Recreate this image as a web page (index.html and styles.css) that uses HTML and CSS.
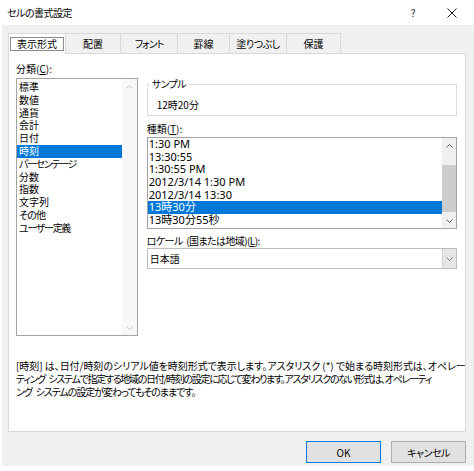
FILE: index.html
```html
<!DOCTYPE html>
<html lang="ja">
<head>
<meta charset="utf-8">
<title>セルの書式設定</title>
<link rel="stylesheet" href="styles.css">
</head>
<body>
<div class="titlebar">
  <span class="title">セルの書式設定</span>
  <span class="help">?</span>
  <span class="close"><svg width="10" height="10" viewBox="0 0 10 10"><path d="M0.5 0.5L9.5 9.5M9.5 0.5L0.5 9.5" stroke="#1a1a1a" stroke-width="1" fill="none"/></svg></span>
</div>
<div class="dialog">
  <div class="tabs">
    <div class="tab active w1"><span class="focus">表示形式</span></div>
    <div class="tab w2">配置</div>
    <div class="tab w3 tight">フォント</div>
    <div class="tab w4">罫線</div>
    <div class="tab w5 tight-s">塗りつぶし</div>
    <div class="tab w6">保護</div>
  </div>
  <div class="panel">
    <div class="columns">
      <div class="col-left">
        <div class="label">分類(<u>C</u>):</div>
        <div class="listbox cat">
          <ul class="items">
            <li>標準</li>
            <li>数値</li>
            <li>通貨</li>
            <li>会計</li>
            <li>日付</li>
            <li class="sel">時刻</li>
            <li class="kana">パーセンテージ</li>
            <li>分数</li>
            <li>指数</li>
            <li>文字列</li>
            <li class="kana-s">その他</li>
            <li class="kana">ユーザー定義</li>
          </ul>
          <div class="vscroll light">
            <div class="arrow"><svg width="7" height="4" viewBox="0 0 7 4"><path d="M0.5 3.5L3.5 0.5L6.5 3.5" fill="none" stroke="#c4c4c4" stroke-width="1"/></svg></div>
            <div class="track"></div>
            <div class="arrow"><svg width="7" height="4" viewBox="0 0 7 4"><path d="M0.5 0.5L3.5 3.5L6.5 0.5" fill="none" stroke="#c4c4c4" stroke-width="1"/></svg></div>
          </div>
        </div>
      </div>
      <div class="col-right">
        <fieldset class="sample">
          <legend>サンプル</legend>
          <div class="sample-value">12時20分</div>
        </fieldset>
        <div class="label l-type">種類(<u>T</u>):</div>
        <div class="listbox types">
          <ul class="items">
            <li>1:30 PM</li>
            <li>13:30:55</li>
            <li>1:30:55 PM</li>
            <li>2012/3/14 1:30 PM</li>
            <li>2012/3/14 13:30</li>
            <li class="sel">13時30分</li>
            <li>13時30分55秒</li>
          </ul>
          <div class="vscroll">
            <div class="arrow"><svg width="7" height="4" viewBox="0 0 7 4"><path d="M0.5 3.5L3.5 0.5L6.5 3.5" fill="none" stroke="#606060" stroke-width="1"/></svg></div>
            <div class="track"><div class="thumb"></div></div>
            <div class="arrow"><svg width="7" height="4" viewBox="0 0 7 4"><path d="M0.5 0.5L3.5 3.5L6.5 0.5" fill="none" stroke="#606060" stroke-width="1"/></svg></div>
          </div>
        </div>
        <div class="label l-locale">ロケール (国または地域)(<u>L</u>):</div>
        <div class="combo">
          <span class="combo-text">日本語</span>
          <span class="combo-btn"><svg width="7" height="4" viewBox="0 0 7 4"><path d="M0.5 0.5L3.5 3.5L6.5 0.5" fill="none" stroke="#7a7a7a" stroke-width="1"/></svg></span>
        </div>
      </div>
    </div>
    <p class="desc">
      <span class="line l1">[時刻] は、日付/時刻のシリアル値を時刻形式で表示します。アスタリスク (*) で始まる時刻形式は、オペレー</span>
      <span class="line l2">ティング システムで指定する地域の日付/時刻の設定に応じて変わります。アスタリスクのない形式は、オペレーティ</span>
      <span class="line l3">ング システムの設定が変わってもそのままです。</span>
    </p>
  </div>
  <div class="buttons">
    <button class="btn default">OK</button>
    <button class="btn tight-s">キャンセル</button>
  </div>
</div>
</body>
</html>
```
FILE: styles.css
```css
* {
  box-sizing: border-box;
}

html,
body {
  margin: 0;
  padding: 0;
  background: #ffffff;
}

body {
  width: 474px;
  height: 471px;
  overflow: hidden;
  font-family: "Noto Sans CJK JP", "Noto Sans", sans-serif;
  font-size: 10px;
  color: #000000;
  font-feature-settings: "palt";
}

.tight {
  letter-spacing: -1px;
}

.tight-s {
  letter-spacing: -0.5px;
}

/* title bar */
.titlebar {
  height: 25px;
  display: flex;
  align-items: center;
  background: #ffffff;
}

.title {
  flex: 1;
  padding-left: 7px;
  line-height: 14px;
  letter-spacing: -0.5px;
}

.help {
  width: 12px;
  text-align: center;
  margin-right: 27px;
  line-height: 14px;
  color: #1a1a1a;
}

.close {
  width: 12px;
  height: 12px;
  display: flex;
  align-items: center;
  justify-content: center;
  margin-right: 16px;
}

/* dialog body */
.dialog {
  margin-left: 2px;
  height: 441px;
  background: #f0f0f0;
  padding: 8px 8px 3px 6px;
}

.tabs {
  display: flex;
  align-items: flex-start;
  height: 20px;
}

.tab {
  height: 20px;
  border: 1px solid #d9d9d9;
  border-bottom: none;
  margin-right: -1px;
  display: flex;
  align-items: center;
  justify-content: center;
  line-height: 12px;
  background: #f0f0f0;
}

.tab.active {
  position: relative;
  z-index: 1;
  height: 21px;
  background: #ffffff;
  padding-bottom: 1px;
}

.focus {
  border: 1px solid #8c8c8c;
  padding: 0 6px;
  line-height: 12px;
}

.w1 { width: 58px; }
.w2 { width: 56px; }
.w3 { width: 58px; }
.w4 { width: 53px; }
.w5 { width: 58px; }
.w6 { width: 55px; }

.panel {
  background: #ffffff;
  border: 1px solid #d9d9d9;
  height: 379px;
  padding: 8px 8px 0 7px;
}

.columns {
  display: flex;
  gap: 9px;
  align-items: flex-start;
}

.col-left {
  width: 122px;
}

.col-right {
  width: 311px;
}

.label {
  height: 13px;
  line-height: 13px;
  white-space: nowrap;
}

.listbox {
  border: 1px solid #a3a3a3;
  display: flex;
  background: #ffffff;
  overflow: hidden;
}

.listbox.cat {
  margin-top: 3px;
  height: 258px;
}

.items {
  flex: 1;
  list-style: none;
  margin: 0;
  padding: 0;
  min-width: 0;
}

.cat .items {
  padding-top: 2px;
}

.items li {
  height: 12.8px;
  line-height: 12.8px;
  padding-left: 2px;
  white-space: nowrap;
}

.items li.kana {
  letter-spacing: -1.3px;
}

.items li.kana-s {
  letter-spacing: -0.8px;
}

.types .items {
  font-family: "Noto Sans", "Noto Sans CJK JP", sans-serif;
  font-size: 11px;
}

.types .items li {
  height: 12.7px;
  line-height: 12.7px;
  padding-left: 1px;
}

.items li.sel {
  background: #0078d7;
  color: #ffffff;
}

.vscroll {
  width: 14px;
  display: flex;
  flex-direction: column;
  background: #f0f0f0;
}

.vscroll.light {
  width: 15px;
  background: #f7f7f7;
}

.arrow {
  height: 15px;
  display: flex;
  align-items: center;
  justify-content: center;
}

.track {
  flex: 1;
  padding-top: 12px;
}

.thumb {
  height: 47px;
  background: #cdcdcd;
}

/* sample group */
.sample {
  margin: 16px 0 0 0;
  padding: 0 0 0 2px;
  border: 1px solid #dcdcdc;
  height: 38px;
  min-width: 0;
}

.sample legend {
  padding: 0 2px;
  line-height: 12px;
  letter-spacing: -0.6px;
}

.sample-value {
  margin: 8px 0 0 7px;
  line-height: 13px;
}

.l-type {
  margin-top: 6px;
}

.listbox.types {
  margin-top: 2px;
  height: 92px;
}

.l-locale {
  margin-top: 5px;
  letter-spacing: -0.6px;
  word-spacing: 2px;
}

.combo {
  margin-top: 1px;
  height: 21px;
  border: 1px solid #bcbcbc;
  display: flex;
  align-items: stretch;
  background: #ffffff;
}

.combo-text {
  flex: 1;
  padding-left: 2px;
  line-height: 19px;
}

.combo-btn {
  width: 14px;
  background: #e6e6e6;
  border-left: 1px solid #d2d2d2;
  display: flex;
  align-items: center;
  justify-content: center;
}

.desc {
  margin: 23px 0 0 0;
  line-height: 13px;
  white-space: nowrap;
}

.line {
  display: block;
  height: 13px;
}

.l1 {
  letter-spacing: -0.05px;
}

.l2 {
  letter-spacing: -1.3px;
  word-spacing: 2.5px;
}

.l3 {
  letter-spacing: -1.05px;
  word-spacing: 2.5px;
}

/* buttons */
.buttons {
  display: flex;
  justify-content: flex-end;
  gap: 10px;
  margin-top: 9px;
}

.btn {
  width: 75px;
  height: 22px;
  padding: 0;
  font-family: inherit;
  font-size: 10px;
  font-feature-settings: "palt";
  color: #000000;
  background: #e1e1e1;
  border: 1px solid #adadad;
}

.btn.default {
  border-color: #0078d7;
}
```
